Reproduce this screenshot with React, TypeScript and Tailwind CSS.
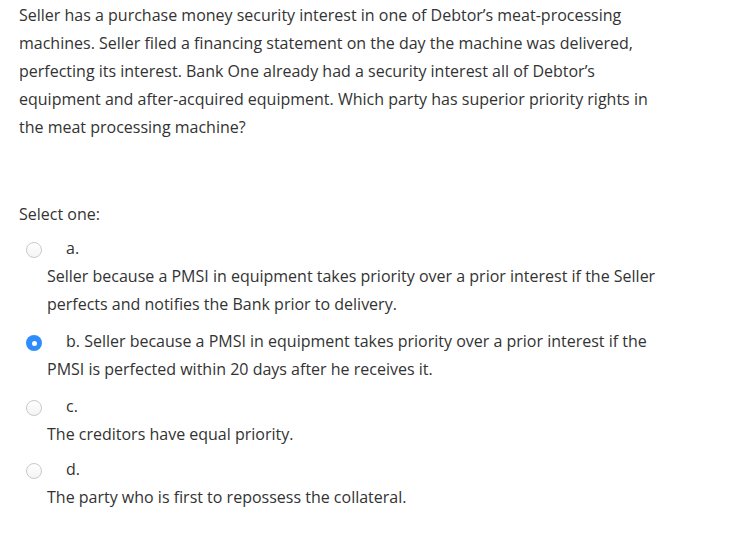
import React from "react";

type Option = {
  letter: string;
  text: string;
  checked?: boolean;
  inline?: boolean;
  gap: string;
};

const options: Option[] = [
  {
    letter: "a.",
    text: "Seller because a PMSI in equipment takes priority over a prior interest if the Seller perfects and notifies the Bank prior to delivery.",
    gap: "mt-[6px]",
  },
  {
    letter: "b.",
    text: "Seller because a PMSI in equipment takes priority over a prior interest if the PMSI is perfected within 20 days after he receives it.",
    checked: true,
    inline: true,
    gap: "mt-[9px]",
  },
  { letter: "c.", text: "The creditors have equal priority.", gap: "mt-[9px]" },
  { letter: "d.", text: "The party who is first to repossess the collateral.", gap: "mt-[7px]" },
];

function Radio({ checked }: { checked?: boolean }) {
  if (checked) {
    return (
      <span className="absolute left-[26px] top-[8px] flex h-4 w-4 items-center justify-center rounded-full bg-[#2f8dfb]">
        <span className="h-[5px] w-[5px] rounded-full bg-white" />
      </span>
    );
  }
  return (
    <span className="absolute left-[26px] top-[8px] h-4 w-4 rounded-full border border-[#c9c9c9] bg-gradient-to-b from-white to-[#f4f4f4]" />
  );
}

export default function App() {
  return (
    <div
      className="min-h-[539px] w-[732px] bg-white text-[16px] leading-[28px] text-[#333]"
      style={{ fontFamily: '"Open Sans", "Liberation Sans", sans-serif' }}
    >
      <div className="w-[668px] pl-[19px] pt-[1px]">
        <p>
          Seller has a purchase money security interest in one of Debtor’s meat-processing machines. Seller filed a
          financing statement on the day the machine was delivered, perfecting its interest. Bank One already had a
          security interest all of Debtor’s equipment and after-acquired equipment. Which party has superior priority
          rights in the meat processing machine?
        </p>

        <div className="mt-[59px]">Select one:</div>

        <div className="-ml-[19px]">
          {options.map((o) => (
            <div key={o.letter} className={`relative pl-[47px] ${o.gap}`}>
              <Radio checked={o.checked} />
              {o.inline ? (
                <div className="indent-[19px]">
                  {o.letter} {o.text}
                </div>
              ) : (
                <>
                  <div className="pl-[19px]">{o.letter}</div>
                  <div>{o.text}</div>
                </>
              )}
            </div>
          ))}
        </div>
      </div>
    </div>
  );
}
